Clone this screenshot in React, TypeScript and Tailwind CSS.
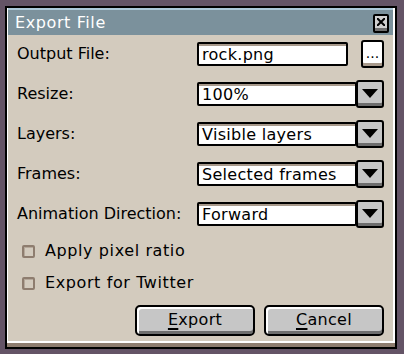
import React from 'react'

function Field({ children, className = '' }: { children?: React.ReactNode; className?: string }) {
  return (
    <div
      className={`h-[24px] mt-[2px] border-2 border-black bg-white rounded-[2px] shadow-[inset_0_2px_0_#a89a8c] pl-[3px] pt-[1px] flex items-center text-[16px] leading-none tracking-[0.3px] whitespace-nowrap overflow-hidden ${className}`}
    >
      {children}
    </div>
  )
}

function ArrowButton() {
  return (
    <div className="w-[28px] h-[28px] -ml-[1px] border-2 border-black bg-[#c6c6c6] rounded-[3px] shadow-[inset_0_-3px_0_#6e6e6e] flex items-center justify-center pb-[2px]">
      <svg width="16" height="9" viewBox="0 0 16 9">
        <polygon points="0,0 16,0 8,9" fill="#000" />
      </svg>
    </div>
  )
}

function Dropdown({ value }: { value: string }) {
  return (
    <div className="flex items-start">
      <Field className="flex-1">{value}</Field>
      <ArrowButton />
    </div>
  )
}

function Row({ label, children }: { label: string; children: React.ReactNode }) {
  return (
    <div className="grid grid-cols-[180px_1fr] items-center h-[28px]">
      <span className="text-[16px] leading-none">{label}</span>
      {children}
    </div>
  )
}

function Check({ label }: { label: string }) {
  return (
    <div className="flex items-center gap-[10px] pl-[5px] h-[20px]">
      <div className="w-[13px] h-[13px] border-2 border-[#8e7d6f] rounded-[2px] bg-[#d3cbbe] shadow-[inset_1px_1px_0_#b5a89a]" />
      <span className="text-[16px] leading-none tracking-[0.6px]">{label}</span>
    </div>
  )
}

function DlgButton({ children }: { children: React.ReactNode }) {
  return (
    <div className="w-[120px] h-[31px] border-2 border-black rounded-[5px] bg-[#c6c6c6] shadow-[inset_2px_2px_0_#ffffff,inset_0_-3px_0_#6e6e6e] flex items-center justify-center pb-[2px] text-[16px] leading-none tracking-[0.3px]">
      {children}
    </div>
  )
}

export default function App() {
  return (
    <div className="w-[404px] h-[354px] bg-[#645466] pt-[6px] pl-[5px] font-['DejaVu_Sans',sans-serif] text-black">
      <div className="w-[392px] h-[343px] border-2 border-black flex flex-col">
        <div className="flex-1 flex flex-col border-l border-r-2 border-b-2 border-white">
          {/* Title */}
          <div className="h-[27px] bg-[#7b919c] border-t-2 border-[#acc8d8] flex items-center justify-between pl-[7px] pr-[4px]">
            <span className="text-white text-[16px] leading-none tracking-[0.6px]">Export File</span>
            <div className="w-[16px] h-[19px] border-2 border-black bg-[#d0d0d0] rounded-[2px] shadow-[inset_0_-3px_0_#6e6e6e] flex items-center justify-center pb-[3px] mt-[2px]">
              <svg width="8" height="8" viewBox="0 0 8 8">
                <path d="M0 0L8 8M8 0L0 8" stroke="#000" strokeWidth="2" />
              </svg>
            </div>
          </div>
          {/* Body */}
          <div className="flex-1 bg-[#d3cbbe] px-[9px] pt-[5px] flex flex-col">
            <div className="flex flex-col gap-[12px]">
              <Row label="Output File:">
                <div className="flex items-start">
                  <Field className="flex-1">rock.png</Field>
                  <div className="ml-[13px] w-[23px] h-[28px] border-2 border-black bg-white rounded-[3px] shadow-[inset_0_-3px_0_#a89a8c] flex items-end justify-center pb-[6px] text-[14px] leading-none">
                    ...
                  </div>
                </div>
              </Row>
              <Row label="Resize:">
                <Dropdown value="100%" />
              </Row>
              <Row label="Layers:">
                <Dropdown value="Visible layers" />
              </Row>
              <Row label="Frames:">
                <Dropdown value="Selected frames" />
              </Row>
              <Row label="Animation Direction:">
                <Dropdown value="Forward" />
              </Row>
            </div>
            <div className="mt-[13px] flex flex-col gap-[12px]">
              <Check label="Apply pixel ratio" />
              <Check label="Export for Twitter" />
            </div>
            <div className="mt-[12px] flex justify-end gap-[9px]">
              <DlgButton>
                <span className="underline underline-offset-[3px] decoration-2">E</span>xport
              </DlgButton>
              <DlgButton>
                <span className="underline underline-offset-[3px] decoration-2">C</span>ancel
              </DlgButton>
            </div>
          </div>
        </div>
        <div className="h-[4px] bg-[#8e7d6f]" />
      </div>
    </div>
  )
}
